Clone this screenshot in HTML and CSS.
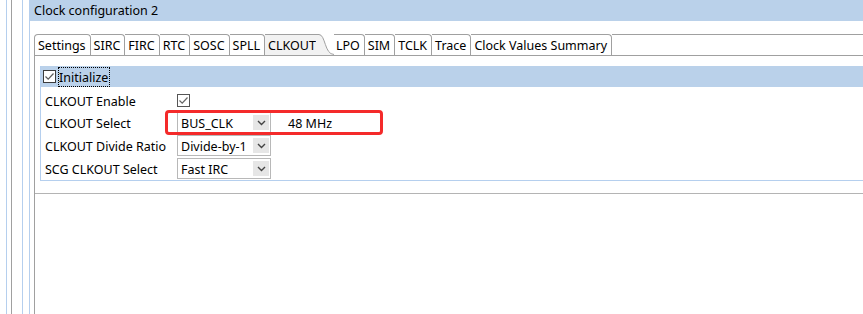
FILE: index.html
```html
<!DOCTYPE html>
<html>
<head>
<meta charset="utf-8">
<link rel="stylesheet" href="styles.css">
</head>
<body>
<div class="rail r1"><div class="rail r2"><div class="rail r3"><div class="rail r4">
  <div class="view">
    <div class="titlebar">Clock configuration 2</div>
    <div class="folder">
      <div class="tabs">
        <div class="tab first">Settings</div>
        <div class="tab">SIRC</div>
        <div class="tab">FIRC</div>
        <div class="tab">RTC</div>
        <div class="tab">SOSC</div>
        <div class="tab">SPLL</div>
        <div class="tab active"><span class="tab-label">CLKOUT</span><svg class="curve" width="18" height="21" viewBox="0 0 18 21"><path d="M0 0 H3 C9 0 9 21 18 21 H0 Z" fill="#f2f2f2"/><path d="M0 0.5 H3 C9.5 0.5 8.5 20.5 18 20.5" fill="none" stroke="#a0a0a0" stroke-width="1"/></svg></div>
        <div class="tab after">LPO</div>
        <div class="tab">SIM</div>
        <div class="tab">TCLK</div>
        <div class="tab">Trace</div>
        <div class="tab">Clock Values Summary</div>
        <div class="tab-fill"></div>
      </div>
      <div class="folder-body">
        <div class="page">
          <section class="group">
            <div class="group-head">
              <span class="cb"><svg width="11" height="11" viewBox="0 0 11 11"><path d="M1.5 5.5 L4.2 8.2 L9.5 2.5" fill="none" stroke="#5a5a5a" stroke-width="1.2"/></svg></span>
              <span class="focus">Initialize</span>
            </div>
            <div class="form">
              <div class="lbl">CLKOUT Enable</div>
              <div class="ctl"><span class="cb light"><svg width="11" height="11" viewBox="0 0 11 11"><path d="M1.5 5.5 L4.2 8.2 L9.5 2.5" fill="none" stroke="#666" stroke-width="1.2"/></svg></span></div>

              <div class="lbl">CLKOUT Select</div>
              <div class="ctl"><div class="combo"><span class="combo-text">BUS_CLK</span><span class="combo-btn"><svg width="9" height="6" viewBox="0 0 9 6"><path d="M1 1 L4.5 4.5 L8 1" fill="none" stroke="#444" stroke-width="1.4"/></svg></span></div><span class="freq">48 MHz</span></div>

              <div class="lbl">CLKOUT Divide Ratio</div>
              <div class="ctl"><div class="combo"><span class="combo-text">Divide-by-1</span><span class="combo-btn"><svg width="9" height="6" viewBox="0 0 9 6"><path d="M1 1 L4.5 4.5 L8 1" fill="none" stroke="#444" stroke-width="1.4"/></svg></span></div></div>

              <div class="lbl">SCG CLKOUT Select</div>
              <div class="ctl"><div class="combo"><span class="combo-text">Fast IRC</span><span class="combo-btn"><svg width="9" height="6" viewBox="0 0 9 6"><path d="M1 1 L4.5 4.5 L8 1" fill="none" stroke="#444" stroke-width="1.4"/></svg></span></div></div>
            </div>
          </section>
        </div>
      </div>
    </div>
  </div>
</div></div></div></div>
<div class="annotation"></div>
</body>
</html>
```
FILE: styles.css
```css
html, body {
  margin: 0;
  padding: 0;
  background: #fff;
}
body {
  font-family: "Noto Sans", "Open Sans", "Noto Sans CJK SC", sans-serif;
  font-size: 12.5px;
  color: #000;
  width: 863px;
  height: 314px;
  overflow: hidden;
  position: relative;
}
.rail {
  height: 314px;
  box-sizing: border-box;
}
.r1 { margin-left: 6px; border-left: 1px solid #b5cfee; padding-left: 4px; }
.r2 { border-left: 1px solid #a0a0a0; padding-left: 10px; }
.r3 { border-left: 1px solid #b5cfee; padding-left: 6px; }
.r4 { border-left: 1px solid #b5cfee; display: flex; }
.view {
  flex: 1;
  display: flex;
  flex-direction: column;
}
.titlebar {
  height: 21px;
  line-height: 21px;
  background: #bad1ea;
  padding-left: 4px;
  font-size: 12.5px;
}
.folder {
  margin-top: 13px;
  margin-left: 4px;
  flex: 1;
  display: flex;
  flex-direction: column;
}
.tabs {
  display: flex;
  align-items: flex-end;
  height: 21px;
}
.tab {
  height: 20px;
  line-height: 21px;
  border-top: 1px solid #a0a0a0;
  border-right: 1px solid #a0a0a0;
  border-top-right-radius: 4px;
  padding: 0 4px 0 3px;
  white-space: nowrap;
  background: #fff;
}
.tab.first {
  border-left: 1px solid #a0a0a0;
  border-top-left-radius: 4px;
}
.tab.active {
  background: #f2f2f2;
  border-right: none;
  border-radius: 0;
  padding: 0;
  height: 21px;
  border-top: none;
  display: flex;
  align-items: flex-start;
}
.tab.active .tab-label {
  border-top: 1px solid #a0a0a0;
  height: 20px;
  line-height: 21px;
  padding: 0 0 0 3px;
}
.tab.active .curve {
  display: block;
  background: #fff;
}
.tab.after {
  padding-left: 2px;
}
.tab-fill {
  flex: 1;
  height: 20px;
  border-top: 1px solid #a0a0a0;
}
.folder-body {
  flex: 1;
  border-left: 1px solid #a0a0a0;
  border-top: 1px solid #a0a0a0;
}
.page {
  height: 138px;
  box-sizing: border-box;
  padding-top: 10px;
  border-bottom: 1px solid #b4b4b4;
}
.group {
  margin-left: 5px;
  border-left: 1px solid #b5cfee;
  border-bottom: 1px solid #b5cfee;
}
.group-head {
  height: 21px;
  background: #bad1ea;
  display: flex;
  align-items: center;
  padding-left: 2px;
}
.cb {
  width: 11px;
  height: 11px;
  border: 1px solid #3c3c3c;
  background: #fff;
  display: inline-flex;
}
.cb.light {
  border-color: #555;
}
.focus {
  margin-left: 2px;
  border: 1px dotted #000;
  padding: 1px 1px 0 0;
  line-height: 17px;
}
.form {
  display: grid;
  grid-template-columns: 132px auto;
  grid-template-rows: 19px 21px 21px 21px;
  row-gap: 2px;
  padding: 4px 0 1px 4px;
  align-items: center;
}
.lbl {
  white-space: nowrap;
  padding-top: 2px;
}
.ctl {
  display: flex;
  align-items: center;
}
.combo {
  width: 94px;
  height: 21px;
  box-sizing: border-box;
  border: 1px solid #b8b8b8;
  display: flex;
  align-items: stretch;
  background: #fff;
}
.combo-text {
  flex: 1;
  padding-left: 3px;
  line-height: 21px;
  white-space: nowrap;
  overflow: hidden;
}
.combo-btn {
  width: 16px;
  margin: 2px 1px 2px 0;
  background: #e6e6e6;
  display: flex;
  align-items: center;
  justify-content: center;
}
.freq {
  margin-left: 17px;
  padding-top: 2px;
}
.annotation {
  position: absolute;
  left: 165px;
  top: 110px;
  width: 218px;
  height: 25px;
  box-sizing: border-box;
  border: 3px solid #f42a2a;
  border-radius: 4px;
}
```
